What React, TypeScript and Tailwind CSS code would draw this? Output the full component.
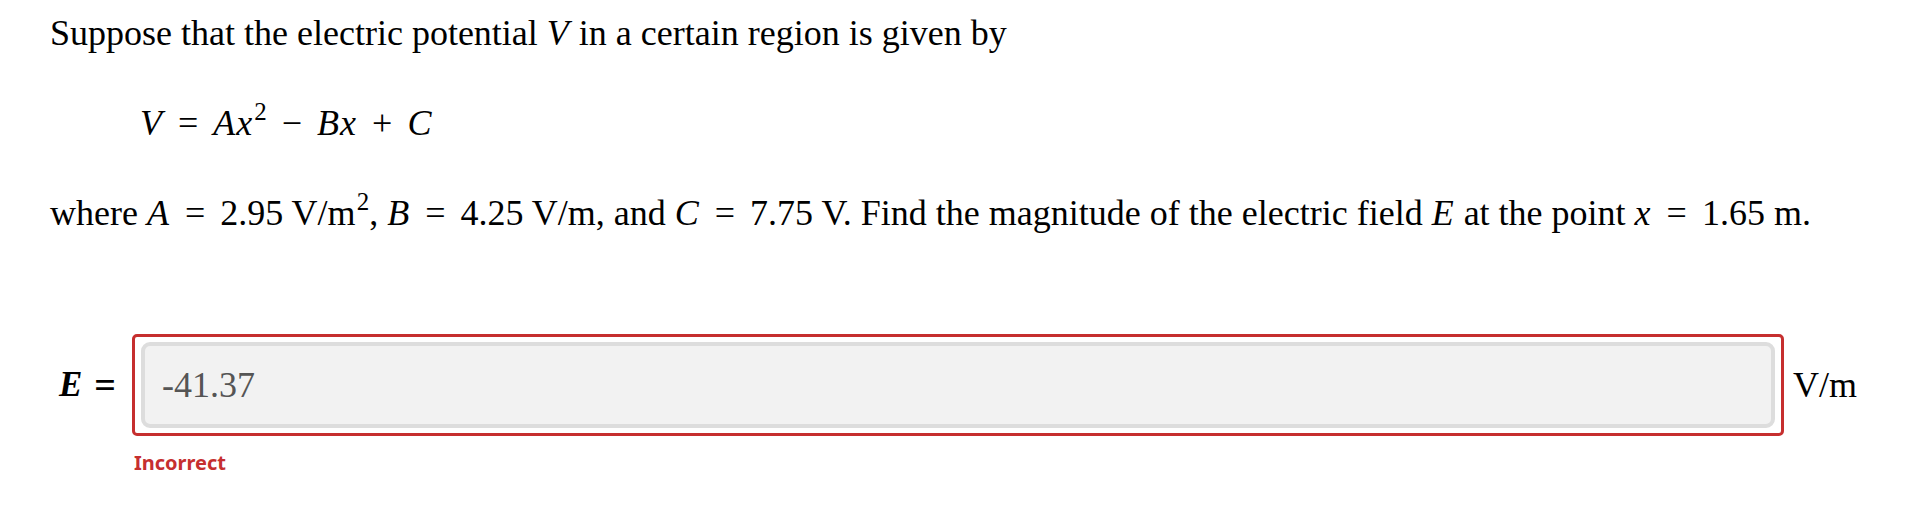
const serif = "font-['Liberation_Serif','Times_New_Roman',serif]";

function M({ children, bold }: { children: React.ReactNode; bold?: boolean }) {
  return <i className={`tracking-[1px] ${bold ? 'font-bold' : ''}`}>{children}</i>;
}

function Eq() {
  return <span className="mx-[15px]">=</span>;
}

function Op({ children }: { children: React.ReactNode }) {
  return <span className="mx-[15px]">{children}</span>;
}

function Sup({ children }: { children: React.ReactNode }) {
  return <sup className="text-[25px] relative -top-[15px] ml-[1px]">{children}</sup>;
}

export default function App() {
  return (
    <div className={`${serif} bg-white text-black w-[1916px] h-[516px] pl-[50px] pr-[59px] pt-[11px]`}>
      <p className="text-[36px] leading-[44px] whitespace-nowrap">
        Suppose that the electric potential <M>V</M> in a certain region is given by
      </p>

      <p className="mt-[46px] ml-[90px] text-[36px] leading-[44px] whitespace-nowrap">
        <M>V</M>
        <Op>=</Op>
        <M>Ax</M>
        <Sup>2</Sup>
        <Op>−</Op>
        <M>Bx</M>
        <Op>+</Op>
        <M>C</M>
      </p>

      <p className="mt-[46px] text-[36px] leading-[44px] whitespace-nowrap">
        where <M>A</M>
        <Eq />
        2.95 V/m<Sup>2</Sup>, <M>B</M>
        <Eq />
        4.25 V/m, and <M>C</M>
        <Eq />
        7.75 V. Find the magnitude of the electric field <M>E</M> at the point <M>x</M>
        <Eq />
        1.65 m.
      </p>

      <div className="mt-[99px] flex items-start">
        <div className="w-[82px] h-[102px] pl-[9px] flex items-center text-[35px]">
          <M bold>E</M>
          <span className="ml-[11px] font-bold text-[38px]">=</span>
        </div>
        <div className="flex-1 flex flex-col">
          <div className="flex items-center">
            <div className="flex-1 border-[3px] border-[#c62f2f] rounded-[5px] px-[6px] py-[5px]">
              <div className="h-[86px] border-[4px] border-[#dddddd] bg-[#f2f2f2] rounded-[9px] pl-[17px] flex items-center text-[36px] text-[#555555]">
                -41.37
              </div>
            </div>
            <span className="ml-[9px] text-[36px]">V/m</span>
          </div>
          <span className="mt-[13px] ml-[2px] font-['Noto_Sans',sans-serif] font-bold text-[20px] leading-[28px] text-[#c62f2f]">
            Incorrect
          </span>
        </div>
      </div>
    </div>
  );
}
